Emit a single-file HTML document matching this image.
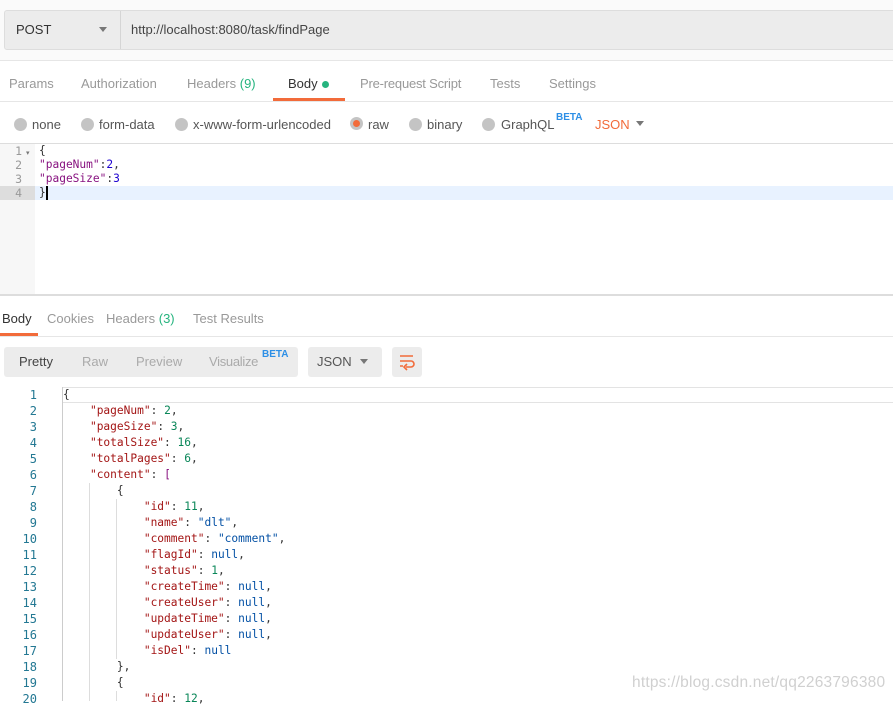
<!DOCTYPE html>
<html><head><meta charset="utf-8"><style>
*{margin:0;padding:0;box-sizing:border-box}
body{width:893px;height:701px;overflow:hidden;background:#fff;font-family:"Liberation Sans",sans-serif;font-size:13px;color:#505050;position:relative}
.a{position:absolute}
.mono{font-family:"DejaVu Sans Mono","Liberation Mono",monospace}
.k{color:#a31515}.s{color:#0451a5}.n{color:#098658}.nl{color:#0451a5}
</style></head><body>
<div class="a" style="left:0;top:0;width:893px;height:60px;background:#fafafa"></div>
<div class="a" style="left:4px;top:10px;width:900px;height:40px;background:#ececec;border:1px solid #ddd;border-radius:3px"></div>
<div class="a" style="left:120px;top:11px;width:1px;height:38px;background:#d5d5d5"></div>
<div class="a" style="left:16px;top:22px;font-size:13px;color:#333">POST</div>
<div class="a" style="left:99px;top:27px;width:0;height:0;border-left:4px solid transparent;border-right:4px solid transparent;border-top:5px solid #777"></div>
<div class="a" style="left:131px;top:22px;font-size:13px;color:#444">http://localhost:8080/task/findPage</div>
<div class="a" style="left:0;top:60px;width:893px;height:1px;background:#e6e6e6"></div>
<div class="a" style="left:0;top:76px;font-size:13px;color:#999;white-space:nowrap">
<span class="a" style="left:9px">Params</span><span class="a" style="left:81px">Authorization</span><span class="a" style="left:187px">Headers <span style="color:#26b47f">(9)</span></span><span class="a" style="left:288px;color:#333">Body</span><span class="a" style="left:360px;letter-spacing:-0.2px">Pre-request Script</span><span class="a" style="left:490px">Tests</span><span class="a" style="left:549px">Settings</span></div>
<div class="a" style="left:322px;top:81px;width:7px;height:7px;border-radius:50%;background:#26b47f"></div>
<div class="a" style="left:273px;top:98px;width:72px;height:3px;background:#f26b3a"></div>
<div class="a" style="left:0;top:101px;width:893px;height:1px;background:#e6e6e6"></div>
<div class="a" style="left:0;top:117px;font-size:13px;color:#555;white-space:nowrap">
<span class="a" style="left:32px">none</span><span class="a" style="left:99px">form-data</span><span class="a" style="left:193px">x-www-form-urlencoded</span><span class="a" style="left:368px">raw</span><span class="a" style="left:427px">binary</span><span class="a" style="left:501px">GraphQL</span><span class="a" style="left:556px;top:-5px;font-size:10px;font-weight:bold;color:#2d8fe6">BETA</span><span class="a" style="left:595px;color:#f26b3a">JSON</span></div>
<div class="a" style="left:14px;top:118px;width:13px;height:13px;border-radius:50%;background:#c4c4c4"></div>
<div class="a" style="left:81px;top:118px;width:13px;height:13px;border-radius:50%;background:#c4c4c4"></div>
<div class="a" style="left:175px;top:118px;width:13px;height:13px;border-radius:50%;background:#c4c4c4"></div>
<div class="a" style="left:350px;top:117px;width:13px;height:13px;border-radius:50%;background:#c4c4c4"></div>
<div class="a" style="left:353px;top:120px;width:7px;height:7px;border-radius:50%;background:#f26b3a"></div>
<div class="a" style="left:409px;top:118px;width:13px;height:13px;border-radius:50%;background:#c4c4c4"></div>
<div class="a" style="left:482px;top:118px;width:13px;height:13px;border-radius:50%;background:#c4c4c4"></div>
<div class="a" style="left:636px;top:121px;border-left:4px solid transparent;border-right:4px solid transparent;border-top:5px solid #777"></div>
<div class="a" style="left:0;top:143px;width:893px;height:1px;background:#ddd"></div>
<div class="a" style="left:0;top:144px;width:35px;height:150px;background:#f7f7f7"></div>
<div class="a" style="left:0;top:186px;width:35px;height:14px;background:#ddd"></div>
<div class="a" style="left:35px;top:186px;width:858px;height:14px;background:#e8f2ff"></div>
<div class="a mono" style="left:0;top:144px;font-size:11.5px;line-height:14px;color:#999;width:22px;text-align:right">1<br>2<br>3<br>4</div>
<div class="a" style="left:26px;top:149px;font-size:7px;color:#777">▾</div>
<div class="a mono" style="left:39px;top:144px;font-size:11.2px;line-height:14px;color:#333;white-space:pre">{
<span style="color:#881280">"pageNum"</span>:<span style="color:#1c00cf">2</span>,
<span style="color:#881280">"pageSize"</span>:<span style="color:#1c00cf">3</span>
}</div>
<div class="a" style="left:46px;top:186px;width:2px;height:14px;background:#000"></div>
<div class="a" style="left:0;top:294px;width:893px;height:2px;background:#ddd"></div>
<div class="a" style="left:0;top:311px;font-size:13px;color:#999;white-space:nowrap">
<span class="a" style="left:2px;color:#333">Body</span><span class="a" style="left:47px">Cookies</span><span class="a" style="left:106px">Headers <span style="color:#26b47f">(3)</span></span><span class="a" style="left:193px">Test Results</span></div>
<div class="a" style="left:0;top:333px;width:38px;height:3px;background:#f26b3a"></div>
<div class="a" style="left:0;top:336px;width:893px;height:1px;background:#e6e6e6"></div>
<div class="a" style="left:4px;top:347px;width:294px;height:30px;background:#ececec;border-radius:3px"></div>
<div class="a" style="left:0;top:354px;font-size:13px;color:#aaa;white-space:nowrap">
<span class="a" style="left:19px;color:#444">Pretty</span><span class="a" style="left:82px">Raw</span><span class="a" style="left:136px">Preview</span><span class="a" style="left:209px;letter-spacing:-0.3px">Visualize</span><span class="a" style="left:262px;top:-5px;font-size:10px;font-weight:bold;color:#2d8fe6">BETA</span></div>
<div class="a" style="left:308px;top:347px;width:74px;height:30px;background:#ececec;border-radius:3px"></div>
<div class="a" style="left:317px;top:354px;font-size:13px;color:#555">JSON</div>
<div class="a" style="left:360px;top:359px;border-left:4px solid transparent;border-right:4px solid transparent;border-top:5px solid #777"></div>
<div class="a" style="left:392px;top:347px;width:30px;height:30px;background:#ececec;border-radius:3px"></div>
<svg class="a" style="left:399px;top:353px" width="16" height="18" viewBox="0 0 16 18"><path d="M1 3H14M1 8H12a3 3 0 0 1 0 6H7M1 13H4M8 11l-3 3 3 3" fill="none" stroke="#f26b3a" stroke-width="1.6"/></svg>
<div class="a" style="left:62px;top:387px;width:831px;height:16px;border-top:1px solid #e3e3e3;border-bottom:1px solid #e3e3e3"></div>
<div class="a" style="left:62px;top:387px;width:1px;height:314px;background:#ccc"></div>
<div class="a" style="left:89px;top:483px;width:1px;height:218px;background:#ddd"></div>
<div class="a" style="left:116px;top:499px;width:1px;height:160px;background:#ddd"></div>
<div class="a" style="left:116px;top:691px;width:1px;height:10px;background:#ddd"></div>
<div class="a mono" style="left:0;top:387px;font-size:12px;line-height:16px;color:#237893;width:37px;text-align:right;white-space:pre">1
2
3
4
5
6
7
8
9
10
11
12
13
14
15
16
17
18
19
20</div>
<div class="a mono" style="left:63px;top:387px;font-size:11.2px;line-height:16px;color:#333;white-space:pre">{
    <span class="k">"pageNum"</span>: <span class="n">2</span>,
    <span class="k">"pageSize"</span>: <span class="n">3</span>,
    <span class="k">"totalSize"</span>: <span class="n">16</span>,
    <span class="k">"totalPages"</span>: <span class="n">6</span>,
    <span class="k">"content"</span>: <span style="color:#881280">[</span>
        {
            <span class="k">"id"</span>: <span class="n">11</span>,
            <span class="k">"name"</span>: <span class="s">"dlt"</span>,
            <span class="k">"comment"</span>: <span class="s">"comment"</span>,
            <span class="k">"flagId"</span>: <span class="nl">null</span>,
            <span class="k">"status"</span>: <span class="n">1</span>,
            <span class="k">"createTime"</span>: <span class="nl">null</span>,
            <span class="k">"createUser"</span>: <span class="nl">null</span>,
            <span class="k">"updateTime"</span>: <span class="nl">null</span>,
            <span class="k">"updateUser"</span>: <span class="nl">null</span>,
            <span class="k">"isDel"</span>: <span class="nl">null</span>
        },
        {
            <span class="k">"id"</span>: <span class="n">12</span>,</div>
<div class="a" style="left:632px;top:674px;font-size:15.5px;letter-spacing:0.2px;color:#d0d0d0">https://blog.csdn.net/qq2263796380</div>
</body></html>
